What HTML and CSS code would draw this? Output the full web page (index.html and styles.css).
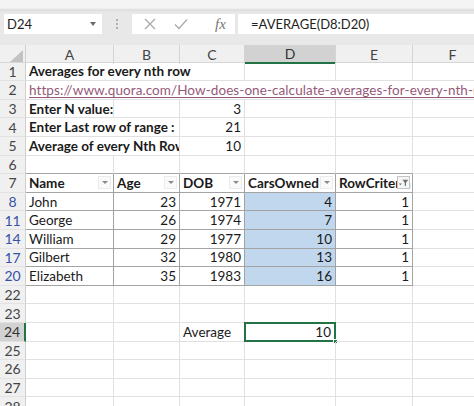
FILE: index.html
```html
<!DOCTYPE html>
<html>
<head>
<meta charset="utf-8">
<link rel="stylesheet" href="styles.css">
</head>
<body>
<div class="topbar">
  <div class="fbar">
    <div class="namebox"><span>D24</span><span class="nb-arrow"></span></div>
    <div class="dots"><i></i><i></i><i></i></div>
    <div class="icons">
      <svg class="ic-x" width="14" height="14" viewBox="0 0 14 14"><path d="M2 2L12 12M12 2L2 12" stroke="#a9a9a9" stroke-width="1.3" fill="none"/></svg>
      <svg class="ic-ok" width="16" height="14" viewBox="0 0 16 14"><path d="M2 7.5L6 11.5L14 2.5" stroke="#a9a9a9" stroke-width="1.3" fill="none"/></svg>
      <span class="fx">fx</span>
    </div>
    <div class="formula">=AVERAGE(D8:D20)</div>
  </div>
</div>

<div class="sheet">
  <div class="row colhead">
    <div class="corner"><span class="tri"></span></div>
    <div class="ch">A</div><div class="ch">B</div><div class="ch">C</div><div class="ch sel">D</div><div class="ch">E</div><div class="ch">F</div>
  </div>

  <div class="row">
    <div class="rh">1</div>
    <div class="c b span3">Averages for every nth row</div>
    <div class="c"></div><div class="c"></div><div class="c"></div>
  </div>
  <div class="row">
    <div class="rh">2</div>
    <div class="c link spanall">https://www.quora.com/How-does-one-calculate-averages-for-every-nth-row-in-Excel</div>
  </div>
  <div class="row">
    <div class="rh">3</div>
    <div class="c b">Enter N value:</div>
    <div class="c"></div>
    <div class="c r">3</div>
    <div class="c"></div><div class="c"></div><div class="c"></div>
  </div>
  <div class="row">
    <div class="rh">4</div>
    <div class="c b span2">Enter Last row of range :</div>
    <div class="c r">21</div>
    <div class="c"></div><div class="c"></div><div class="c"></div>
  </div>
  <div class="row">
    <div class="rh">5</div>
    <div class="c b span2">Average of every Nth Row</div>
    <div class="c r">10</div>
    <div class="c"></div><div class="c"></div><div class="c"></div>
  </div>
  <div class="row">
    <div class="rh">6</div>
    <div class="c tb"></div><div class="c tb"></div><div class="c tb"></div><div class="c tb"></div><div class="c tb"></div><div class="c"></div>
  </div>
  <div class="row">
    <div class="rh">7</div>
    <div class="c t b hd">Name<span class="dd"></span></div>
    <div class="c t b hd">Age<span class="dd"></span></div>
    <div class="c t b hd">DOB<span class="dd"></span></div>
    <div class="c t b hd">CarsOwned<span class="dd"></span></div>
    <div class="c t b hd">RowCriteria<span class="dd flt"><svg width="12" height="12" viewBox="0 0 12 12"><path d="M1 6.5L2.6 8.5L4.2 6.5Z" fill="#707070"/><path d="M4.8 2.5H11.2L8.7 5.6V9.5L7.3 8.6V5.6Z" fill="#707070"/></svg></span></div>
    <div class="c"></div>
  </div>
  <div class="row">
    <div class="rh blue">8</div>
    <div class="c t">John</div><div class="c t r">23</div><div class="c t r">1971</div><div class="c t r hl">4</div><div class="c t r">1</div><div class="c"></div>
  </div>
  <div class="row">
    <div class="rh blue">11</div>
    <div class="c t">George</div><div class="c t r">26</div><div class="c t r">1974</div><div class="c t r hl">7</div><div class="c t r">1</div><div class="c"></div>
  </div>
  <div class="row">
    <div class="rh blue">14</div>
    <div class="c t">William</div><div class="c t r">29</div><div class="c t r">1977</div><div class="c t r hl">10</div><div class="c t r">1</div><div class="c"></div>
  </div>
  <div class="row">
    <div class="rh blue">17</div>
    <div class="c t">Gilbert</div><div class="c t r">32</div><div class="c t r">1980</div><div class="c t r hl">13</div><div class="c t r">1</div><div class="c"></div>
  </div>
  <div class="row">
    <div class="rh blue">20</div>
    <div class="c t">Elizabeth</div><div class="c t r">35</div><div class="c t r">1983</div><div class="c t r hl">16</div><div class="c t r">1</div><div class="c"></div>
  </div>
  <div class="row">
    <div class="rh">22</div>
    <div class="c"></div><div class="c"></div><div class="c"></div><div class="c"></div><div class="c"></div><div class="c"></div>
  </div>
  <div class="row">
    <div class="rh">23</div>
    <div class="c"></div><div class="c"></div><div class="c"></div><div class="c"></div><div class="c"></div><div class="c"></div>
  </div>
  <div class="row">
    <div class="rh selr">24</div>
    <div class="c"></div><div class="c"></div><div class="c">Average</div><div class="c r active">10<span class="handle"></span></div><div class="c"></div><div class="c"></div>
  </div>
  <div class="row">
    <div class="rh">25</div>
    <div class="c"></div><div class="c"></div><div class="c"></div><div class="c"></div><div class="c"></div><div class="c"></div>
  </div>
  <div class="row">
    <div class="rh">26</div>
    <div class="c"></div><div class="c"></div><div class="c"></div><div class="c"></div><div class="c"></div><div class="c"></div>
  </div>
  <div class="row">
    <div class="rh">27</div>
    <div class="c"></div><div class="c"></div><div class="c"></div><div class="c"></div><div class="c"></div><div class="c"></div>
  </div>
  <div class="row">
    <div class="rh">28</div>
    <div class="c"></div><div class="c"></div><div class="c"></div><div class="c"></div><div class="c"></div><div class="c"></div>
  </div>
</div>
</body>
</html>
```

FILE: styles.css
```css
* { box-sizing: border-box; }

html, body {
  margin: 0;
  padding: 0;
}

body {
  width: 474px;
  height: 406px;
  overflow: hidden;
  background: #ffffff;
  font-family: Lato, "Liberation Sans", sans-serif;
  color: #1a1a1a;
}

/* ---------- formula bar ---------- */
.topbar {
  height: 45px;
  padding-top: 14px;
  background: linear-gradient(#f4f4f4 0, #f4f4f4 8px, #dcdcdc 10px, #e8e8e8 12px, #e8e8e8 100%);
}

.fbar {
  display: flex;
  height: 20px;
  padding-left: 4px;
}

.namebox {
  width: 98px;
  background: #fff;
  display: flex;
  align-items: center;
  justify-content: space-between;
  padding: 0 6px 0 3px;
  font-size: 13px;
  color: #222;
}

.nb-arrow {
  width: 0;
  height: 0;
  border-left: 3.5px solid transparent;
  border-right: 3.5px solid transparent;
  border-top: 4px solid #6a6a6a;
}

.dots {
  width: 30px;
  display: flex;
  flex-direction: column;
  align-items: center;
  justify-content: center;
  gap: 2px;
}

.dots i {
  width: 2px;
  height: 2px;
  background: #b0b0b0;
}

.icons {
  width: 103px;
  background: #fff;
  display: flex;
  align-items: center;
  padding-left: 11px;
}

.ic-x { margin-right: 16px; }
.ic-ok { margin-right: 26px; }

.fx {
  font-family: "Liberation Serif", "DejaVu Serif", serif;
  font-style: italic;
  font-size: 15px;
  color: #777;
}

.formula {
  flex: 1;
  margin-left: 3px;
  background: #fff;
  padding-left: 13px;
  font-size: 13px;
  line-height: 20px;
  color: #222;
  white-space: nowrap;
}

/* ---------- sheet grid ---------- */
.row {
  display: grid;
  grid-template-columns: 26px 88px 66px 65px 91px 77px 80px;
  height: 18.6px;
}

.colhead {
  height: 17.6px;
  background: #f0f0f0;
  border-bottom: 1px solid #d6d6d6;
}

.corner {
  position: relative;
  border-right: 1px solid #d0d0d0;
}

.tri {
  position: absolute;
  right: 2px;
  bottom: 2px;
  width: 0;
  height: 0;
  border-left: 13px solid transparent;
  border-bottom: 12px solid #c2c2c2;
}

.ch {
  display: flex;
  align-items: center;
  justify-content: center;
  font-size: 14px;
  color: #444;
  border-right: 1px solid #d4d4d4;
}

.ch.sel {
  background: #d2d2d2;
  border-bottom: 2px solid #217346;
  color: #333;
}

.rh {
  display: flex;
  align-items: center;
  justify-content: center;
  background: #f0f0f0;
  border-right: 1px solid #cfcfcf;
  border-bottom: 1px solid #e2e2e2;
  font-size: 14px;
  color: #444;
}

.rh.blue { color: #3651a8; }

.rh.selr {
  background: #d2d2d2;
  border-right: 2px solid #217346;
  color: #333;
}

.c {
  display: flex;
  align-items: center;
  min-width: 0;
  overflow: hidden;
  white-space: nowrap;
  padding: 0 3px;
  font-size: 13.5px;
  border-right: 1px solid #e1e1e1;
  border-bottom: 1px solid #e1e1e1;
  position: relative;
}

.b { font-weight: 700; }
.r { justify-content: flex-end; }

.span2 { grid-column: span 2; }
.span3 { grid-column: span 3; }
.spanall { grid-column: 2 / -1; }

.link {
  color: #955a7a;
  letter-spacing: 0.08px;
  text-decoration: underline;
  text-decoration-thickness: 1px;
  text-underline-offset: 2px;
}

.tb { border-bottom-color: #a3a3a3; }

.t {
  border-right-color: #a3a3a3;
  border-bottom-color: #a3a3a3;
}

.hd {
  padding-right: 17px;
}

.dd {
  position: absolute;
  right: 2px;
  top: 2px;
  width: 13px;
  height: 13px;
  background: #fafafa;
  border: 1px solid #ececec;
  display: flex;
  align-items: center;
  justify-content: center;
}

.dd::after {
  content: "";
  width: 0;
  height: 0;
  border-left: 3px solid transparent;
  border-right: 3px solid transparent;
  border-top: 3px solid #8a8a8a;
}

.dd.flt {
  border-color: #c4c4c4;
  background: #f6f6f6;
}

.dd.flt::after { display: none; }

.hl { background: #c0d7ee; }

.active {
  border: 2px solid #217346;
  margin: -1px 0 0 -1px;
  height: 19.6px;
  width: 92px;
  overflow: visible;
}

.handle {
  position: absolute;
  right: -4px;
  bottom: -4px;
  width: 5px;
  height: 5px;
  background: #217346;
  border: 1px solid #fff;
}
```
